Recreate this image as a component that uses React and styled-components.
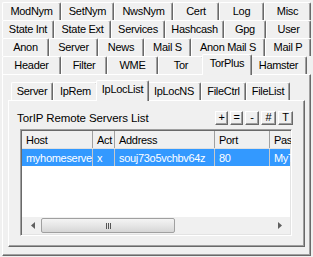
import React from "react";
import styled, { createGlobalStyle } from "styled-components";

const Global = createGlobalStyle`
  html, body { margin: 0; padding: 0; background: #f0f0f0; }
  body { font-family: "Liberation Sans", Arial, sans-serif; font-size: 11px; color: #000; }
`;

const Window = styled.div`
  width: 313px;
  height: 257px;
  box-sizing: border-box;
  padding: 2px 2px 1px 2px;
  background: #f0f0f0;
  display: flex;
  flex-direction: column;
  overflow: hidden;
  letter-spacing: -0.3px;
`;

const TabRow = styled.div`
  display: flex;
  height: 18px;
  flex: none;
  padding-left: ${(p) => p.$indent || 0}px;
`;

const Tab = styled.div`
  position: relative;
  box-sizing: border-box;
  flex: none;
  width: ${(p) => p.$w}px;
  height: ${(p) => (p.$active ? 21 : 18)}px;
  margin: ${(p) => (p.$active ? "-2px -2px 0 -2px" : "0")};
  z-index: ${(p) => (p.$active ? 2 : 1)};
  background: #f0f0f0;
  border-left: 1px solid #fff;
  border-top: 1px solid #fff;
  border-right: 1px solid #696969;
  box-shadow: inset -1px 0 0 #a0a0a0;
  border-radius: 2px 2px 0 0;
  display: flex;
  align-items: center;
  justify-content: center;
  padding-bottom: ${(p) => (p.$active ? 3 : 0)}px;
  white-space: nowrap;
  font-size: 11px;
  line-height: 13px;
`;

const Panel = styled.div`
  box-sizing: border-box;
  flex: none;
  height: 182px;
  border-left: 1px solid #fff;
  border-top: 1px solid #fff;
  border-right: 1px solid #696969;
  border-bottom: 1px solid #696969;
  box-shadow: inset -1px -1px 0 #a0a0a0;
  padding: 7px 5px 8px 5px;
  display: flex;
  flex-direction: column;
`;

const InnerPanel = styled.div`
  box-sizing: border-box;
  flex: 1;
  border-left: 1px solid #fff;
  border-top: 1px solid #fff;
  border-right: 1px solid #696969;
  border-bottom: 1px solid #696969;
  box-shadow: inset -1px -1px 0 #a0a0a0;
  padding: 8px 11px 10px 11px;
  display: flex;
  flex-direction: column;
`;

const ListBar = styled.div`
  display: flex;
  align-items: center;
  height: 17px;
  margin-bottom: 3px;
`;

const ListTitle = styled.div`
  flex: 1;
  margin-left: -3px;
  font-size: 11.5px;
  letter-spacing: -0.1px;
  white-space: nowrap;
`;

const Buttons = styled.div`
  display: flex;
  gap: 2px;
`;

const SmallButton = styled.div`
  box-sizing: border-box;
  width: ${(p) => p.$w}px;
  height: 14px;
  border-left: 1px solid #fff;
  border-top: 1px solid #fff;
  border-right: 1px solid #696969;
  border-bottom: 1px solid #696969;
  box-shadow: inset -1px -1px 0 #a0a0a0;
  display: flex;
  align-items: center;
  justify-content: center;
  font-size: 11px;
  line-height: 11px;
`;

const Grid = styled.div`
  box-sizing: border-box;
  flex: 1;
  margin-right: 1px;
  border-left: 1px solid #a0a0a0;
  border-top: 1px solid #a0a0a0;
  border-right: 1px solid #fff;
  border-bottom: 1px solid #fff;
  box-shadow: inset 1px 1px 0 #696969, inset -1px -1px 0 #e3e3e3;
  padding: 1px 1px 1px 1px;
  background: #fff;
  display: flex;
  flex-direction: column;
  overflow: hidden;
`;

const GridRow = styled.div`
  display: flex;
  height: 17px;
  flex: none;
  background: ${(p) => (p.$header ? "#f0f0f0" : p.$selected ? "#3399ff" : "#fff")};
  color: ${(p) => (p.$selected ? "#fff" : "#000")};
  ${(p) => (p.$header ? "border-bottom: 1px solid #e0e0e0;" : "")}
`;

const Cell = styled.div`
  box-sizing: border-box;
  flex: none;
  width: ${(p) => p.$w}px;
  padding-left: 4px;
  overflow: hidden;
  white-space: nowrap;
  display: flex;
  align-items: center;
  font-size: 11px;
  border-right: 1px solid ${(p) => (p.$header ? "#a0a0a0" : "#c8c8c8")};
`;

const GridBody = styled.div`
  flex: 1;
  background: #fff;
`;

const HScroll = styled.div`
  display: flex;
  align-items: center;
  height: 17px;
  flex: none;
  background: #f0f0f0;
  padding: 0 2px;
`;

const Arrow = styled.div`
  width: 17px;
  height: 17px;
  flex: none;
  display: flex;
  align-items: center;
  justify-content: center;
`;

const Track = styled.div`
  flex: 1;
  height: 17px;
  display: flex;
  align-items: center;
`;

const Thumb = styled.div`
  box-sizing: border-box;
  width: 134px;
  height: 15px;
  border: 1px solid #a0a0a0;
  border-radius: 2px;
  background: linear-gradient(#f4f4f4, #e6e6e6 50%, #d6d6d6);
  display: flex;
  align-items: center;
  justify-content: center;
  gap: 1px;
`;

const Grip = styled.div`
  width: 1px;
  height: 6px;
  background: #555;
`;

const outerRows = [
  [["ModNym", 59], ["SetNym", 53], ["NwsNym", 59], ["Cert", 46], ["Log", 45], ["Misc", 47]],
  [["State Int", 52], ["State Ext", 57], ["Services", 54], ["Hashcash", 59], ["Gpg", 42], ["User", 45]],
  [["Anon", 47], ["Server", 49], ["News", 46], ["Mail S", 47], ["Anon Mail S", 74], ["Mail P", 46]],
  [["Header", 59], ["Filter", 46], ["WME", 51], ["Tor", 46], ["TorPlus", 50], ["Hamster", 57]],
];

const innerTabs = [["Server", 42], ["IpRem", 45], ["IpLocList", 53], ["IpLocNS", 54], ["FileCtrl", 45], ["FileList", 44]];

const columns = [
  ["Host", 71, "myhomeserve"],
  ["Act", 22, "x"],
  ["Address", 100, "souj73o5vchbv64z"],
  ["Port", 55, "80"],
  ["Pas", 24, "MyT"],
];

const ArrowIcon = ({ dir }) => (
  <svg width="4" height="7" viewBox="0 0 4 7">
    {dir === "left" ? <path d="M4 0 L0 3.5 L4 7 Z" fill="#606060" /> : <path d="M0 0 L4 3.5 L0 7 Z" fill="#606060" />}
  </svg>
);

export default function App() {
  return (
    <>
      <Global />
      <Window>
        {outerRows.map((row, i) => (
          <TabRow key={i}>
            {row.map(([label, w]) => (
              <Tab key={label} $w={w} $active={label === "TorPlus"}>{label}</Tab>
            ))}
          </TabRow>
        ))}
        <Panel>
          <TabRow $indent={3}>
            {innerTabs.map(([label, w]) => (
              <Tab key={label} $w={w} $active={label === "IpLocList"}>{label}</Tab>
            ))}
          </TabRow>
          <InnerPanel>
            <ListBar>
              <ListTitle>TorIP Remote Servers List</ListTitle>
              <Buttons>
                {[["+", 13], ["=", 13], ["-", 14], ["#", 15], ["T", 15]].map(([b, w]) => (
                  <SmallButton key={b} $w={w}>{b}</SmallButton>
                ))}
              </Buttons>
            </ListBar>
            <Grid>
              <GridRow $header>
                {columns.map(([h, w]) => (
                  <Cell key={h} $w={w} $header>{h}</Cell>
                ))}
              </GridRow>
              <GridRow $selected>
                {columns.map(([h, w, v]) => (
                  <Cell key={h} $w={w}>{v}</Cell>
                ))}
              </GridRow>
              <GridBody />
              <HScroll>
                <Arrow><ArrowIcon dir="left" /></Arrow>
                <Track>
                  <Thumb><Grip /><Grip /><Grip /></Thumb>
                </Track>
                <Arrow><ArrowIcon dir="right" /></Arrow>
              </HScroll>
            </Grid>
          </InnerPanel>
        </Panel>
      </Window>
    </>
  );
}
